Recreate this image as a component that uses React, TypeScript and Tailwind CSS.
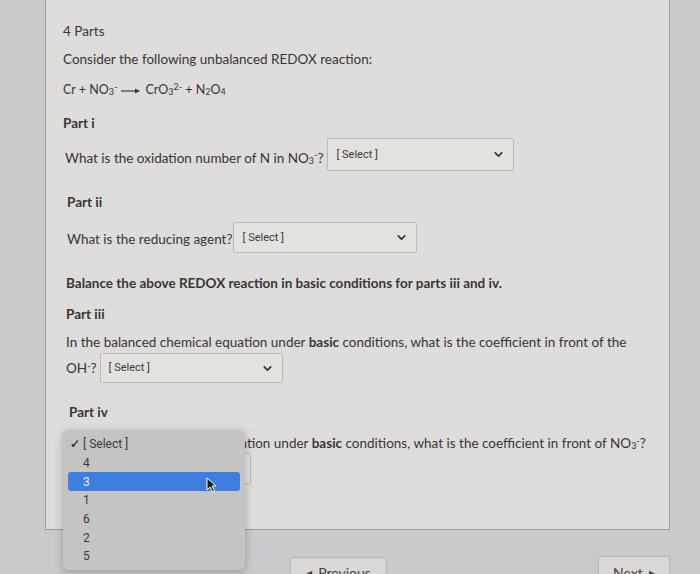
import { ChevronDown } from 'lucide-react'

const options = ['4', '3', '1', '6', '2', '5']

function SelectBox({ width }: { width: string }) {
  return (
    <div
      className={`flex h-full items-center justify-between rounded-[2px] border border-[#b9b9b7] bg-[#e3e2df] pl-[8px] pr-[8px] ${width}`}
    >
      <span className="font-['Roboto',sans-serif] text-[11px] text-[#3d3d3d]">[ Select ]</span>
      <ChevronDown className="h-[13px] w-[13px] text-[#333]" strokeWidth={3} />
    </div>
  )
}

function Sub({ children }: { children: React.ReactNode }) {
  return <sub className="relative top-[1px] text-[9px]">{children}</sub>
}

function Sup({ children }: { children: React.ReactNode }) {
  return <sup className="text-[9px]">{children}</sup>
}

function Arrow() {
  return (
    <svg className="mx-[4px] inline-block align-middle" width="20" height="8" viewBox="0 0 20 8">
      <path d="M0 4 H18" stroke="#3b3b3b" strokeWidth="1.2" />
      <path d="M14 1.5 L19 4 L14 6.5 Z" fill="#3b3b3b" />
    </svg>
  )
}

export default function App() {
  return (
    <div className="relative h-[574px] w-[700px] overflow-hidden bg-[#cbc9cb] font-['Lato',sans-serif] text-[13.5px] leading-[20px] text-[#363636]">
      <div className="ml-[45px] w-[625px] border-x border-b border-[#9d9d9b] bg-[#dedddb] pl-[17px] pt-[21px] pb-[45px]">
        <p>4 Parts</p>
        <p className="mt-[8px]">Consider the following unbalanced REDOX reaction:</p>
        <p className="mt-[11px] text-[12.5px]">
          Cr + NO<Sub>3</Sub>
          <Sup>-</Sup>
          <Arrow />
          CrO<Sub>3</Sub>
          <Sup>2-</Sup> + N<Sub>2</Sub>O<Sub>4</Sub>
        </p>
        <p className="mt-[13px] font-bold">Part i</p>
        <div className="ml-[2px] mt-[5px] flex h-[33px] items-center gap-[4px]">
          <span className="pt-[6px]">
            What is the oxidation number of N in NO<Sub>3</Sub>
            <Sup>-</Sup>?
          </span>
          <SelectBox width="w-[187px]" />
        </div>
        <p className="ml-[4px] mt-[21px] font-bold">Part ii</p>
        <div className="ml-[4px] mt-[10px] flex h-[31px] items-center gap-[1px]">
          <span className="pt-[3px]">What is the reducing agent?</span>
          <SelectBox width="w-[184px]" />
        </div>
        <p className="ml-[3px] mt-[20px] font-bold">Balance the above REDOX reaction in basic conditions for parts iii and iv.</p>
        <p className="ml-[3px] mt-[11px] font-bold">Part iii</p>
        <p className="ml-[3px] mt-[8px]">
          In the balanced chemical equation under <b>basic</b> conditions, what is the coefficient in front of the
        </p>
        <div className="ml-[3px] mt-[1px] flex h-[30px] items-center gap-[3px]">
          <span>
            OH<Sup>-</Sup>?
          </span>
          <SelectBox width="w-[183px]" />
        </div>
        <p className="ml-[6px] mt-[19px] font-bold">Part iv</p>
        <p className="ml-[6px] mt-[11px]">
          In the balanced chemical equation under <b>basic</b> conditions, what is the coefficient in front of NO
          <Sub>3</Sub>
          <Sup>-</Sup>?
        </p>
        <div className="ml-[6px] h-[31px]">
          <SelectBox width="w-[182px]" />
        </div>
      </div>

      <div className="flex w-[670px] justify-between pl-[290px] pt-[27px]">
        <button className="flex h-[40px] w-[97px] items-start justify-center gap-[6px] rounded-[2px] border border-[#b7b6b4] bg-[#d9d8d6] pt-[5px] text-[14px] text-[#444]">
          <span className="text-[8px] leading-[20px]">◀</span>
          Previous
        </button>
        <button className="-mt-[1px] flex h-[40px] w-[72px] items-start justify-center gap-[6px] rounded-[2px] border border-[#b7b6b4] bg-[#d9d8d6] pt-[6px] text-[14px] text-[#444]">
          Next
          <span className="text-[8px] leading-[20px]">▶</span>
        </button>
      </div>

      {/* open native select menu */}
      <div className="absolute left-[63px] top-[430px] h-[140px] w-[182px] rounded-[6px] bg-[#c6c4c2] pt-[5px] font-['Roboto',sans-serif] text-[12px] text-[#3a3a3a] shadow-[0_2px_8px_rgba(0,0,0,0.25)]">
        <div className="flex h-[18.7px] items-center gap-[1px] pl-[7px]">
          <span className="w-[12px] text-[12px] font-bold">✓</span>
          <span>[ Select ]</span>
        </div>
        {options.map((o) => (
          <div
            key={o}
            className={
              o === '3'
                ? 'mx-[5px] flex h-[18.7px] items-center rounded-[3px] bg-[#3c7fe0] pl-[15px] text-[#e8eefa]'
                : 'flex h-[18.7px] items-center pl-[20px]'
            }
          >
            {o}
          </div>
        ))}
      </div>

      {/* mouse cursor */}
      <svg className="absolute left-[206px] top-[477px]" width="11" height="16" viewBox="0 0 11 16">
        <path d="M1 1 L1 13 L4 10 L6.5 15 L8.5 14 L6 9 L10 9 Z" fill="#1a1a1a" stroke="#fff" strokeWidth="1" />
      </svg>
    </div>
  )
}
